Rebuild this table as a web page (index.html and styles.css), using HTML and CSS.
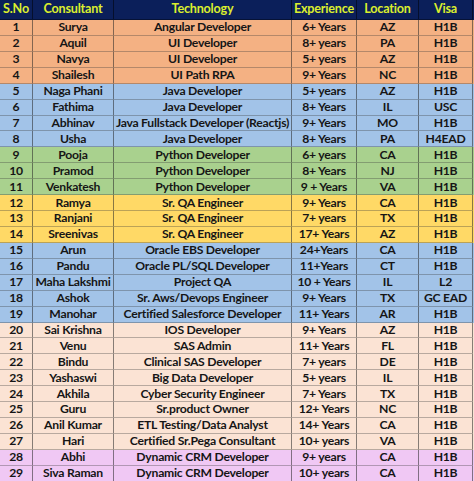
FILE: index.html
```html
<!DOCTYPE html>
<html>
<head>
<meta charset="utf-8">
<link rel="stylesheet" href="styles.css">
</head>
<body>
<div class="sheet">
  <div class="row head"><div class="c">S.No</div><div class="c">Consultant</div><div class="c">Technology</div><div class="c">Experience</div><div class="c">Location</div><div class="c">Visa</div></div>
  <div class="row orange"><div class="c">1</div><div class="c">Surya</div><div class="c">Angular Developer</div><div class="c">6+ Years</div><div class="c">AZ</div><div class="c">H1B</div></div>
  <div class="row orange"><div class="c">2</div><div class="c">Aquil</div><div class="c">UI Developer</div><div class="c">8+ years</div><div class="c">PA</div><div class="c">H1B</div></div>
  <div class="row orange"><div class="c">3</div><div class="c">Navya</div><div class="c">UI Developer</div><div class="c">5+ years</div><div class="c">AZ</div><div class="c">H1B</div></div>
  <div class="row orange"><div class="c">4</div><div class="c">Shailesh</div><div class="c">UI Path RPA</div><div class="c">9+ Years</div><div class="c">NC</div><div class="c">H1B</div></div>
  <div class="row blue"><div class="c">5</div><div class="c">Naga Phani</div><div class="c">Java Developer</div><div class="c">5+ years</div><div class="c">AZ</div><div class="c">H1B</div></div>
  <div class="row blue"><div class="c">6</div><div class="c">Fathima</div><div class="c">Java Developer</div><div class="c">8+ Years</div><div class="c">IL</div><div class="c">USC</div></div>
  <div class="row blue"><div class="c">7</div><div class="c">Abhinav</div><div class="c">Java Fullstack Developer (Reactjs)</div><div class="c">9+ Years</div><div class="c">MO</div><div class="c">H1B</div></div>
  <div class="row blue"><div class="c">8</div><div class="c">Usha</div><div class="c">Java Developer</div><div class="c">8+ Years</div><div class="c">PA</div><div class="c">H4EAD</div></div>
  <div class="row green"><div class="c">9</div><div class="c">Pooja</div><div class="c">Python Developer</div><div class="c">6+ years</div><div class="c">CA</div><div class="c">H1B</div></div>
  <div class="row green"><div class="c">10</div><div class="c">Pramod</div><div class="c">Python Developer</div><div class="c">8+ Years</div><div class="c">NJ</div><div class="c">H1B</div></div>
  <div class="row green"><div class="c">11</div><div class="c">Venkatesh</div><div class="c">Python Developer</div><div class="c">9 + Years</div><div class="c">VA</div><div class="c">H1B</div></div>
  <div class="row yellow"><div class="c">12</div><div class="c">Ramya</div><div class="c">Sr. QA Engineer</div><div class="c">9+ Years</div><div class="c">CA</div><div class="c">H1B</div></div>
  <div class="row yellow"><div class="c">13</div><div class="c">Ranjani</div><div class="c">Sr. QA Engineer</div><div class="c">7+ years</div><div class="c">TX</div><div class="c">H1B</div></div>
  <div class="row yellow"><div class="c">14</div><div class="c">Sreenivas</div><div class="c">Sr. QA Engineer</div><div class="c">17+ Years</div><div class="c">AZ</div><div class="c">H1B</div></div>
  <div class="row blue"><div class="c">15</div><div class="c">Arun</div><div class="c">Oracle EBS Developer</div><div class="c">24+Years</div><div class="c">CA</div><div class="c">H1B</div></div>
  <div class="row blue"><div class="c">16</div><div class="c">Pandu</div><div class="c">Oracle PL/SQL Developer</div><div class="c">11+Years</div><div class="c">CT</div><div class="c">H1B</div></div>
  <div class="row blue"><div class="c">17</div><div class="c">Maha Lakshmi</div><div class="c">Project QA</div><div class="c">10 + Years</div><div class="c">IL</div><div class="c">L2</div></div>
  <div class="row blue"><div class="c">18</div><div class="c">Ashok</div><div class="c">Sr. Aws/Devops Engineer</div><div class="c">9+ Years</div><div class="c">TX</div><div class="c">GC EAD</div></div>
  <div class="row blue"><div class="c">19</div><div class="c">Manohar</div><div class="c">Certified Salesforce Developer</div><div class="c">11+ Years</div><div class="c">AR</div><div class="c">H1B</div></div>
  <div class="row peach"><div class="c">20</div><div class="c">Sai Krishna</div><div class="c">IOS Developer</div><div class="c">9+ Years</div><div class="c">AZ</div><div class="c">H1B</div></div>
  <div class="row peach"><div class="c">21</div><div class="c">Venu</div><div class="c">SAS Admin</div><div class="c">11+ Years</div><div class="c">FL</div><div class="c">H1B</div></div>
  <div class="row peach"><div class="c">22</div><div class="c">Bindu</div><div class="c">Clinical SAS Developer</div><div class="c">7+ years</div><div class="c">DE</div><div class="c">H1B</div></div>
  <div class="row peach"><div class="c">23</div><div class="c">Yashaswi</div><div class="c">Big Data Developer</div><div class="c">5+ years</div><div class="c">IL</div><div class="c">H1B</div></div>
  <div class="row peach"><div class="c">24</div><div class="c">Akhila</div><div class="c">Cyber Security Engineer</div><div class="c">7+ Years</div><div class="c">TX</div><div class="c">H1B</div></div>
  <div class="row peach"><div class="c">25</div><div class="c">Guru</div><div class="c">Sr.product Owner</div><div class="c">12+ Years</div><div class="c">NC</div><div class="c">H1B</div></div>
  <div class="row peach"><div class="c">26</div><div class="c">Anil Kumar</div><div class="c">ETL Testing/Data Analyst</div><div class="c">14+ Years</div><div class="c">CA</div><div class="c">H1B</div></div>
  <div class="row peach"><div class="c">27</div><div class="c">Hari</div><div class="c">Certified Sr.Pega Consultant</div><div class="c">10+ years</div><div class="c">VA</div><div class="c">H1B</div></div>
  <div class="row lilac"><div class="c">28</div><div class="c">Abhi</div><div class="c">Dynamic CRM Developer</div><div class="c">9+ years</div><div class="c">CA</div><div class="c">H1B</div></div>
  <div class="row lilac"><div class="c">29</div><div class="c">Siva Raman</div><div class="c">Dynamic CRM Developer</div><div class="c">10+ years</div><div class="c">CA</div><div class="c">H1B</div></div>
</div>
</body>
</html>
```
FILE: styles.css
```css
html, body {
  margin: 0;
  padding: 0;
  background: #ffffff;
}
body {
  font-family: Lato, "Open Sans", sans-serif;
  font-weight: 700;
  font-size: 12.2px;
  letter-spacing: -0.25px;
  color: #161616;
}
.sheet {
  width: 474px;
  display: flex;
  flex-direction: column;
}
.row {
  display: grid;
  grid-template-columns: 33px 81px 178px 65px 62px 54px;
  height: 15.93px;
}
.row.head {
  height: 20px;
  background: #0b1f5a;
  color: #dbee2e;
  font-size: 12.6px;
  letter-spacing: -0.2px;
}
.c {
  display: flex;
  align-items: center;
  justify-content: center;
  white-space: nowrap;
  overflow: hidden;
  box-sizing: border-box;
  border-right: 1px solid rgba(40, 40, 40, 0.55);
  border-bottom: 1px solid rgba(60, 60, 60, 0.35);
  line-height: 1;
}
.head .c {
  border-right: 1px solid rgba(0, 0, 0, 0.5);
  border-bottom: 1px solid rgba(0, 0, 0, 0.4);
}
.orange { background: #f4b183; }
.blue { background: #a2c3e8; }
.green { background: #a9d18e; }
.yellow { background: #ffd966; }
.peach { background: #fbe3d4; }
.lilac { background: #f0c8f4; }
```
